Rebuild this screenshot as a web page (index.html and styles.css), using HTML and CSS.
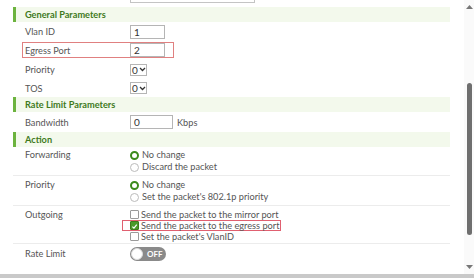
FILE: index.html
```html
<!DOCTYPE html>
<html>
<head>
<meta charset="utf-8">
<link rel="stylesheet" href="styles.css">
</head>
<body>
<div class="page">
  <div class="main">
    <div class="stub"></div>

    <div class="hdr">General Parameters</div>
    <div class="row r19"><div class="label">Vlan ID</div><div class="ctl"><span class="input w35">1</span></div></div>
    <div class="row r19 egress">
      <div class="hl"><div class="label">Egress Port</div><div class="ctl"><span class="input w35">2</span></div></div>
    </div>
    <div class="row r19"><div class="label">Priority</div><div class="ctl"><span class="select">0<svg class="chev" width="7" height="5" viewBox="0 0 7 5"><path d="M1 1 L3.5 3.5 L6 1" fill="none" stroke="#333" stroke-width="1.3"/></svg></span></div></div>
    <div class="row r18"><div class="label">TOS</div><div class="ctl"><span class="select">0<svg class="chev" width="7" height="5" viewBox="0 0 7 5"><path d="M1 1 L3.5 3.5 L6 1" fill="none" stroke="#333" stroke-width="1.3"/></svg></span></div></div>

    <div class="hdr">Rate Limit Parameters</div>
    <div class="row r20"><div class="label">Bandwidth</div><div class="ctl"><span class="input w43">0</span><span class="unit">Kbps</span></div></div>

    <div class="hdr">Action</div>
    <div class="block b-fwd">
      <div class="label">Forwarding</div>
      <div class="opts">
        <div class="opt"><span class="radio on"></span>No change</div>
        <div class="opt"><span class="radio"></span>Discard the packet</div>
      </div>
    </div>
    <div class="block b-pri">
      <div class="label">Priority</div>
      <div class="opts">
        <div class="opt"><span class="radio on"></span>No change</div>
        <div class="opt"><span class="radio"></span>Set the packet's 802.1p priority</div>
      </div>
    </div>
    <div class="block b-out">
      <div class="label">Outgoing</div>
      <div class="opts">
        <div class="opt c"><span class="cb"></span>Send the packet to the mirror port</div>
        <div class="opt c hlc"><span class="cb on"><svg width="9" height="9" viewBox="0 0 9 9"><path d="M1.8 4.6 L3.8 6.6 L7.4 2.2" fill="none" stroke="#fff" stroke-width="1.5"/></svg></span>Send the packet to the egress port</div>
        <div class="opt c"><span class="cb"></span>Set the packet's VlanID</div>
      </div>
    </div>
    <div class="block b-rate">
      <div class="label">Rate Limit</div>
      <div class="opts"><span class="toggle"><span class="knob"></span><span class="tt">OFF</span></span></div>
    </div>
  </div>
  <div class="sbar">
    <svg class="arr" width="7" height="4" viewBox="0 0 7 4"><path d="M0 4 L3.5 0 L7 4 Z" fill="#777"/></svg>
    <div class="thumb"></div>
    <svg class="arr dn" width="7" height="4" viewBox="0 0 7 4"><path d="M0 0 L3.5 4 L7 0 Z" fill="#777"/></svg>
  </div>
</div>
<div class="bottom"></div>
</body>
</html>
```

FILE: styles.css
```css
html, body { margin: 0; padding: 0; background: #fff; }
body {
  width: 474px; height: 278px; overflow: hidden;
  font-family: "Lato", "Noto Sans", sans-serif;
  font-size: 9.2px; color: #555;
}
.page { display: flex; height: 274px; }
.main { width: 437px; margin-left: 13px; }
.sbar {
  width: 10px; margin-left: 14px; background: #fafafa;
  display: flex; flex-direction: column; align-items: center;
}
.arr { margin-top: 5px; margin-left: 1px; }
.thumb { width: 5px; height: 152px; background: #6f6f6f; border-radius: 3px; margin-top: 74px; margin-left: 1px; }
.arr.dn { margin-top: 30px; }
.bottom { height: 4px; background: #c9c9c9; }

.stub { height: 3px; width: 125px; margin-left: 117px; border: 1px solid #c4c4c4; border-top: none; box-sizing: border-box; }
.hdr {
  height: 15px; line-height: 15px; background: #f3f9ec;
  border-left: 3px solid #6cb33e; padding-left: 9px;
  font-weight: bold; color: #3f7a1c; font-size: 9.2px;
}
.stub + .hdr { margin-top: 4px; }
.row { display: flex; align-items: center; padding-left: 12px; }
.r19 { height: 19px; }
.r18 { height: 18px; }
.r20 { height: 20px; }
.label { width: 105px; flex: none; }
.ctl { display: flex; align-items: center; }
.input {
  display: inline-block; box-sizing: border-box; height: 14px; line-height: 12px;
  border: 1px solid #b5b5b5; padding-left: 3px; color: #333; font-size: 10px;
}
.w35 { width: 35px; }
.w43 { width: 43px; }
.unit { margin-left: 4px; }
.select {
  display: inline-flex; align-items: center; box-sizing: border-box; height: 12px; width: 17px;
  border: 1px solid #b5b5b5; padding-left: 1px; color: #333; font-size: 10px; gap: 1px;
}
.egress { padding-left: 9px; align-items: flex-start; }
.hl {
  display: flex; align-items: center; box-sizing: border-box;
  width: 152px; height: 16px; margin-top: 1px; padding-left: 2px;
  border: 1px solid #e08080;
}
.hl .label { width: 105px; }

.block { display: flex; padding-left: 12px; border-bottom: 1px solid #ececec; }
.block .label { line-height: 12px; }
.opts { display: flex; flex-direction: column; }
.opt { display: flex; align-items: center; height: 12px; line-height: 12px; white-space: nowrap; }
.opt.c { height: 11px; line-height: 11px; }
.b-fwd { padding-top: 2px; padding-bottom: 2px; }
.b-pri { padding-top: 3px; padding-bottom: 2px; }
.b-out { padding-top: 3px; padding-bottom: 1px; }
.b-rate { padding-top: 3px; border-bottom: none; }
.b-rate .label { line-height: 14px; }
.radio {
  width: 9px; height: 9px; box-sizing: border-box; border-radius: 50%;
  border: 1px solid #bbb; margin-right: 3px; flex: none;
}
.radio.on { border: 2.5px solid #3c8a1c; }
.cb {
  width: 9px; height: 9px; box-sizing: border-box; border: 1px solid #9a9a9a;
  border-radius: 1px; margin-right: 2px; flex: none; display: flex;
}
.cb.on { background: #4a9a2a; border-color: #3f7a1c; }
.hlc { margin-left: -8px; padding-left: 7px; width: 159px; box-sizing: border-box; border: 1px solid #e06070; height: 12px; }
.toggle {
  display: inline-flex; align-items: center; width: 36px; height: 14px; border-radius: 7px;
  background: #8a8a8a; box-sizing: border-box; padding-left: 1px;
}
.knob { width: 12px; height: 12px; border-radius: 50%; background: #fff; box-sizing: border-box; border: 1px solid #ddd; }
.tt { color: #fff; font-size: 8px; margin-left: 4px; font-weight: bold; }
```
